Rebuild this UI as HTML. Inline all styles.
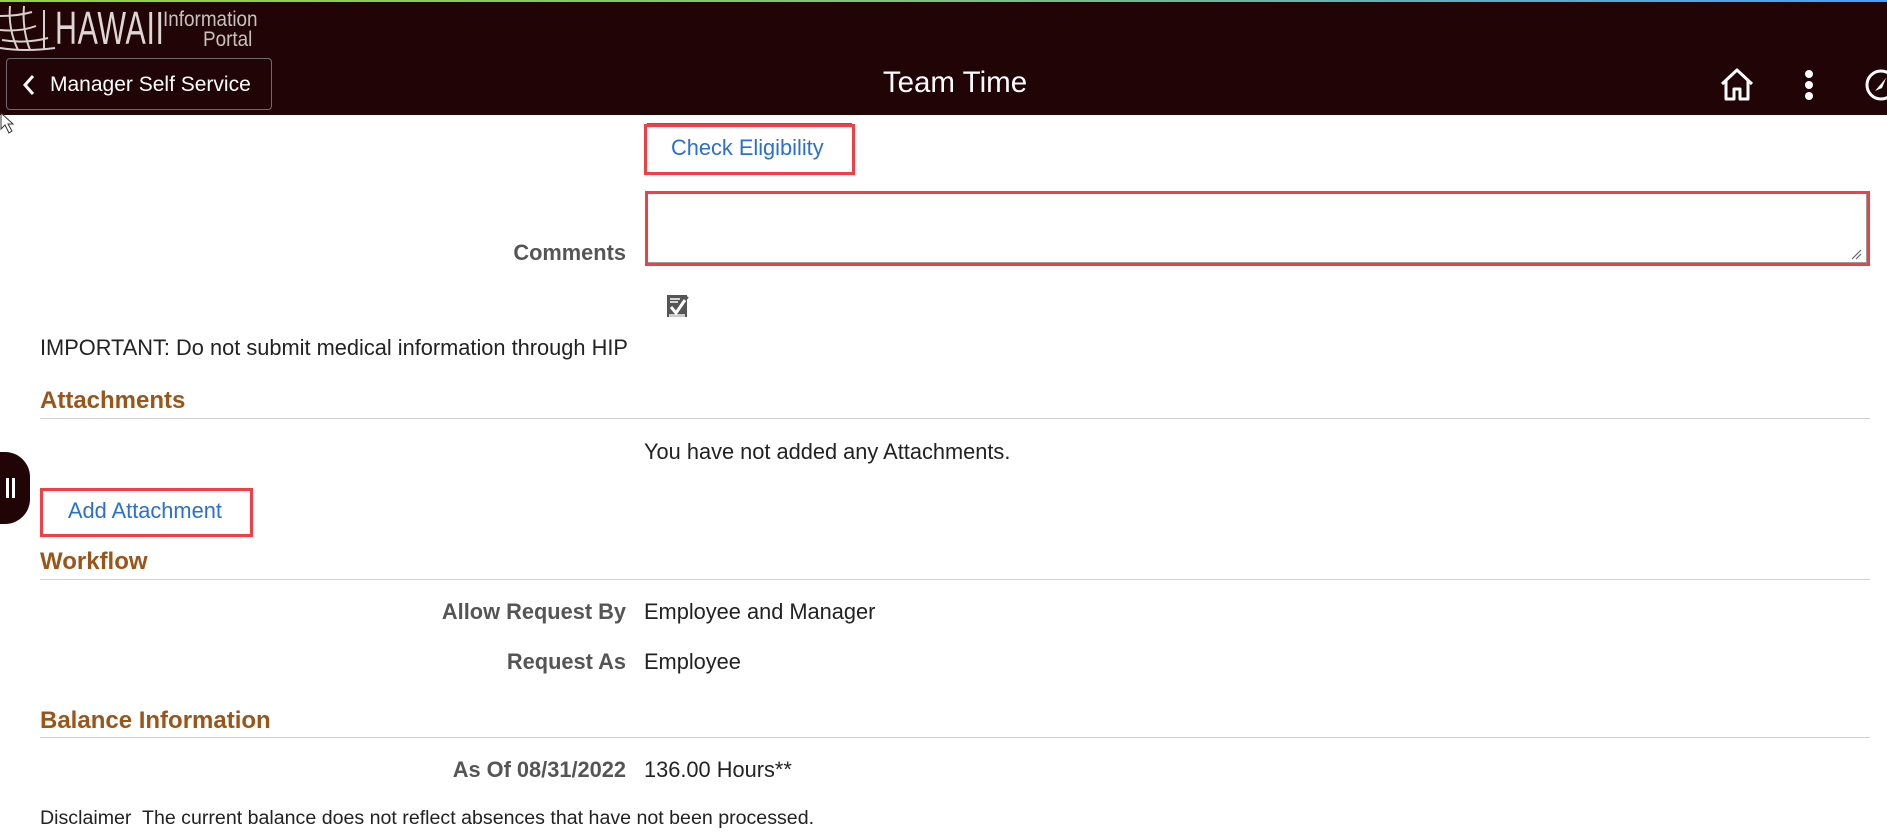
<!DOCTYPE html>
<html><head><meta charset="utf-8">
<style>
*{margin:0;padding:0;box-sizing:border-box}
body{width:1887px;height:840px;overflow:hidden;background:#fff;font-family:"Liberation Sans",Arial,sans-serif;position:relative;color:#222}
.a{position:absolute;white-space:nowrap}
#top{left:0;top:0;width:1887px;height:2px;background:linear-gradient(90deg,#97d13a 0%,#7fc07a 50%,#4b9cf6 100%)}
#hdr{left:0;top:2px;width:1887px;height:113px;background:#210405}
.lbl{font-size:21.8px;font-weight:bold;color:#555;text-align:right;right:1261px;line-height:26px}
.val{font-size:21.8px;color:#222;left:644px;line-height:26px}
.h{font-size:24px;font-weight:bold;color:#9c5518;left:40px;line-height:28px}
.ln{left:40px;width:1830px;height:1px;background:#d0d0d0}
.lnk{font-size:21.8px;color:#2a6fd1}
.red{border:3px solid #f23e45}
</style></head><body>
<div class="a" id="top"></div>
<div class="a" id="hdr"></div>
<!-- logo -->
<svg class="a" style="left:0;top:4px" width="60" height="48" viewBox="0 0 60 48">
<g fill="none" stroke="#d8d0ce" stroke-width="2">
<path d="M0 44 Q25 48 55 44"/><path d="M10 2 Q8 25 18 46"/><path d="M24 2 Q22 25 30 46"/>
<path d="M0 12 Q18 12 32 8"/><path d="M0 26 Q20 28 36 22"/><path d="M2 36 Q25 40 48 34"/><path d="M44 6 L44 46"/>
</g></svg>
<div class="a" style="left:55px;top:4px;font-size:46px;color:#ddd6d4;line-height:48px;transform:scaleX(0.66);transform-origin:left;letter-spacing:1px">HAWAII</div>
<div class="a" style="left:163px;top:10px;font-size:21px;color:#c8c0be;line-height:20px;transform:scaleX(0.9);transform-origin:left">Information</div>
<div class="a" style="left:203px;top:30px;font-size:21px;color:#c8c0be;line-height:20px;transform:scaleX(0.9);transform-origin:left">Portal</div>
<!-- back button -->
<div class="a" style="left:6px;top:58px;width:266px;height:52px;border:1px solid #6e6a70;border-radius:4px"></div>
<svg class="a" style="left:22px;top:74px" width="14" height="22" viewBox="0 0 14 22"><path d="M11 2 L3 11 L11 20" fill="none" stroke="#fff" stroke-width="3"/></svg>
<div class="a" style="left:50px;top:72px;font-size:21px;color:#fff;line-height:26px">Manager Self Service</div>
<div class="a" style="left:0;width:1910px;text-align:center;top:66px;font-size:29.5px;color:#fff;line-height:34px">Team Time</div>
<!-- icons -->
<svg class="a" style="left:1719px;top:68px" width="36" height="34" viewBox="0 0 36 34"><path d="M3 16 L18 2 L33 16 M7 13 V31 H15 V21 H21 V31 H29 V13" fill="none" stroke="#fff" stroke-width="3" stroke-linejoin="round"/></svg>
<svg class="a" style="left:1802px;top:68px" width="14" height="34"><circle cx="7" cy="6" r="4" fill="#fff"/><circle cx="7" cy="17" r="4" fill="#fff"/><circle cx="7" cy="28" r="4" fill="#fff"/></svg>
<svg class="a" style="left:1862px;top:68px" width="30" height="34" viewBox="0 0 30 34"><circle cx="19" cy="17" r="14" fill="none" stroke="#fff" stroke-width="3"/><path d="M13 23 L24 10 L20 20 Z" fill="#fff"/></svg>
<!-- cursor -->
<svg class="a" style="left:0;top:113px" width="14" height="22"><path d="M1 0 L1 16 L5 12 L9 20 L12 18 L8 11 L13 11 Z" fill="#fff" stroke="#333" stroke-width="1"/></svg>
<!-- content -->
<div class="a" style="left:647px;top:123px;width:205px;height:2px;background:#2a6fd1"></div>
<div class="a red" style="left:644px;top:124px;width:211px;height:51px"></div>
<div class="a lnk" style="left:671px;top:135px;line-height:26px">Check Eligibility</div>
<div class="a lbl" style="top:240px">Comments</div>
<div class="a red" style="left:645px;top:191px;width:1225px;height:75px"></div>
<div class="a" style="left:648px;top:194px;width:1219px;height:69px;border-right:1px solid #999;border-bottom:1px solid #999"></div>
<svg class="a" style="left:1850px;top:248px" width="12" height="12"><path d="M2 11 L11 2 M6 11 L11 6" stroke="#666" stroke-width="1.2"/></svg>
<svg class="a" style="left:666px;top:294px" width="26" height="25" viewBox="0 0 26 25"><rect x="1" y="1" width="20" height="22" fill="#555"/><rect x="3" y="20" width="16" height="3" fill="#ccc"/><path d="M4 5 H14 M4 8 H12" stroke="#fff" stroke-width="1.5"/><path d="M5 13 L10 19 L19 6" fill="none" stroke="#fff" stroke-width="3"/><path d="M19 6 L22 3" stroke="#555" stroke-width="2"/></svg>
<div class="a val" style="left:40px;top:335px">IMPORTANT: Do not submit medical information through HIP</div>
<div class="a h" style="top:387px">Attachments</div>
<div class="a ln" style="top:418px"></div>
<div class="a val" style="top:439px">You have not added any Attachments.</div>
<div class="a" style="left:-20px;top:452px;width:50px;height:72px;background:#210405;border-radius:0 25px 25px 0"></div>
<div class="a" style="left:6px;top:478px;width:3px;height:20px;background:#fff"></div>
<div class="a" style="left:12px;top:478px;width:3px;height:20px;background:#fff"></div>
<div class="a red" style="left:40px;top:488px;width:213px;height:49px"></div>
<div class="a lnk" style="left:68px;top:498px;line-height:26px">Add Attachment</div>
<div class="a h" style="top:548px">Workflow</div>
<div class="a ln" style="top:579px"></div>
<div class="a lbl" style="top:599px">Allow Request By</div>
<div class="a val" style="top:599px">Employee and Manager</div>
<div class="a lbl" style="top:649px">Request As</div>
<div class="a val" style="top:649px">Employee</div>
<div class="a h" style="top:707px">Balance Information</div>
<div class="a ln" style="top:737px"></div>
<div class="a lbl" style="top:757px">As Of 08/31/2022</div>
<div class="a val" style="top:757px">136.00 Hours**</div>
<div class="a" style="left:40px;top:806px;font-size:19.6px;line-height:24px;color:#222">Disclaimer&nbsp; The current balance does not reflect absences that have not been processed.</div>
</body></html>
